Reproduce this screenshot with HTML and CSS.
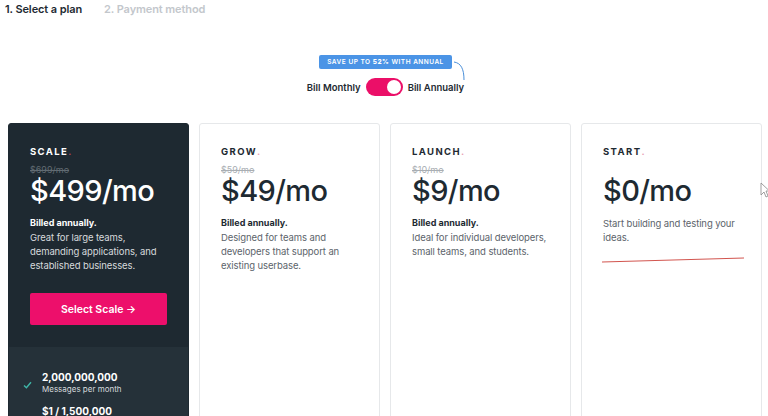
FILE: index.html
```html
<!DOCTYPE html>
<html>
<head>
<meta charset="utf-8">
<link rel="stylesheet" href="styles.css">
</head>
<body>
<div class="steps">
  <span class="step active">1. Select a plan</span>
  <span class="step">2. Payment method</span>
</div>
<div class="billing">
  <div class="badge-wrap">
    <span class="badge">SAVE UP TO <b>52%</b> WITH ANNUAL</span>
    <svg class="curve" width="14" height="22" viewBox="0 0 14 22"><path d="M1 2 C8 3 11 9 11 20" fill="none" stroke="#4a8fd9" stroke-width="1"/></svg>
  </div>
  <div class="toggle-row">
    <span class="tlabel">Bill Monthly</span>
    <span class="switch"><span class="knob"></span></span>
    <span class="tlabel">Bill Annually</span>
  </div>
</div>
<div class="plans">
  <div class="card dark">
    <div class="card-top">
      <div class="name">SCALE<span class="dot">.</span></div>
      <div class="old">$699/mo</div>
      <div class="price">$499/mo</div>
      <div class="billed">Billed annually.</div>
      <div class="desc">Great for large teams, demanding applications, and established businesses.</div>
      <button class="cta">Select Scale →</button>
    </div>
    <div class="features">
      <div class="feat">
        <svg class="check" width="9" height="8" viewBox="0 0 9 8"><path d="M1 4.5 L3.4 6.8 L8 1.2" fill="none" stroke="#3fb6a8" stroke-width="1.4"/></svg>
        <div><div class="fnum">2,000,000,000</div><div class="flab">Messages per month</div></div>
      </div>
      <div class="feat">
        <span class="check-space"></span>
        <div><div class="fnum">$1 / 1,500,000</div></div>
      </div>
    </div>
  </div>
  <div class="card">
    <div class="card-top">
      <div class="name">GROW<span class="dot">.</span></div>
      <div class="old">$59/mo</div>
      <div class="price">$49/mo</div>
      <div class="billed">Billed annually.</div>
      <div class="desc">Designed for teams and developers that support an existing userbase.</div>
    </div>
  </div>
  <div class="card">
    <div class="card-top">
      <div class="name">LAUNCH<span class="dot">.</span></div>
      <div class="old">$10/mo</div>
      <div class="price">$9/mo</div>
      <div class="billed">Billed annually.</div>
      <div class="desc">Ideal for individual developers, small teams, and students.</div>
    </div>
  </div>
  <div class="card">
    <div class="card-top">
      <div class="name">START<span class="dot">.</span></div>
      <div class="old empty"></div>
      <div class="price">$0/mo</div>
      <div class="desc solo">Start building and testing your ideas.</div>
      <svg class="scribble" width="144" height="8" viewBox="0 0 144 8"><path d="M0 6 L142 2" stroke="#d2554f" stroke-width="1.2" fill="none"/></svg>
    </div>
  </div>
</div>
<svg class="cursor" width="10" height="16" viewBox="0 0 10 16"><path d="M1 1 L1 13 L4 10 L6 15 L8 14 L6 9 L9.5 9 Z" fill="#fff" stroke="#888" stroke-width="0.8"/></svg>
</body>
</html>
```
FILE: styles.css
```css
* { box-sizing: border-box; }
html, body { margin: 0; padding: 0; background: #fff; }
body {
  font-family: Inter, "Noto Sans", sans-serif;
  color: #1e2a32;
  width: 768px;
  height: 416px;
  overflow: hidden;
  position: relative;
}
.steps {
  display: flex;
  gap: 22px;
  padding: 2px 0 0 5px;
  font-size: 11px;
  font-weight: 600;
  height: 20px;
  letter-spacing: -0.1px;
}
.step { color: #c3c7cc; }
.step.active { color: #1e2a32; }
.billing {
  display: flex;
  flex-direction: column;
  align-items: center;
  margin-top: 35px;
  gap: 9px;
  padding-left: 3px;
}
.badge-wrap { position: relative; }
.badge {
  display: block;
  background: #4b94e6;
  color: #fff;
  font-size: 6.5px;
  font-weight: 600;
  letter-spacing: 0.5px;
  padding: 3px 8px;
  border-radius: 2px;
  line-height: 8px;
}
.badge b { font-weight: 800; }
.curve { position: absolute; left: 100%; top: 5px; margin-left: 1px; }
.toggle-row {
  display: flex;
  align-items: center;
  gap: 5px;
  font-size: 9.5px;
  font-weight: 600;
}
.switch {
  width: 37px;
  height: 18px;
  border-radius: 9px;
  background: #eb0f68;
  position: relative;
  display: block;
}
.knob {
  position: absolute;
  right: 2px;
  top: 2px;
  width: 14px;
  height: 14px;
  border-radius: 50%;
  background: #fff;
}
.plans {
  display: flex;
  gap: 10px;
  margin: 27px 0 0 8px;
  align-items: flex-start;
}
.card {
  width: 181px;
  height: 320px;
  border: 1px solid #e6e8ea;
  border-radius: 3px;
  background: #fff;
  display: flex;
  flex-direction: column;
}
.card.dark {
  background: #1e2931;
  border-color: #1e2931;
  color: #fff;
}
.card-top { padding: 22px 21px 0 21px; display: flex; flex-direction: column; }
.name {
  font-size: 9.5px;
  font-weight: 700;
  letter-spacing: 1.4px;
  line-height: 12px;
}
.dot { color: #e8a0b4; letter-spacing: 0; }
.dark .dot { color: #a8425e; }
.old {
  margin-top: 7px;
  font-size: 9px;
  color: #a9aeb3;
  text-decoration: line-through;
  line-height: 10px;
  height: 10px;
}
.dark .old { color: #616b72; }
.price {
  font-size: 29px;
  font-weight: 500;
  line-height: 28px;
  letter-spacing: -0.6px;
  margin-top: 2px;
}
.billed {
  margin-top: 12px;
  font-size: 9px;
  font-weight: 700;
  line-height: 12px;
  margin-bottom: 2px;
}
.desc {
  font-size: 9.5px;
  line-height: 14px;
  color: #5c646b;
  letter-spacing: -0.1px;
}
.desc.solo { margin-top: 12px; }
.dark .desc { color: #d6dadd; }
.cta {
  margin-top: 20px;
  height: 32px;
  width: 137px;
  border: none;
  border-radius: 2px;
  background: #ed0f6b;
  color: #fff;
  font-family: inherit;
  font-size: 10.5px;
  font-weight: 600;
}
.scribble { margin-top: 11px; margin-left: -1px; }
.features {
  margin-top: 22px;
  background: #253139;
  flex: 1;
  padding: 24px 14px 0 14px;
  display: flex;
  flex-direction: column;
  gap: 10px;
}
.feat { display: flex; align-items: center; gap: 10px; }
.check, .check-space { width: 9px; flex: none; margin-top: 4px; }
.fnum { font-size: 10px; font-weight: 700; line-height: 13px; }
.flab { font-size: 8px; color: #d6dadd; line-height: 11px; }
.cursor { position: absolute; left: 760px; top: 182px; }
```
